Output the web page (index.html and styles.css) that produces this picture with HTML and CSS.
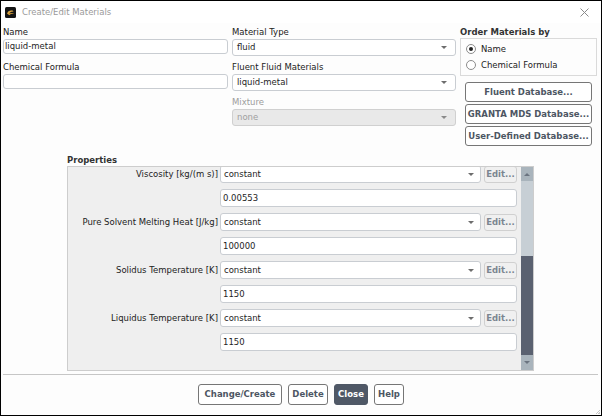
FILE: index.html
```html
<!DOCTYPE html>
<html>
<head>
<meta charset="utf-8">
<link rel="stylesheet" href="styles.css">
</head>
<body>
<div class="window">
  <div class="titlebar">
    <svg class="app-icon" width="11" height="11" viewBox="0 0 11 11">
      <rect x="0" y="0" width="11" height="11" rx="1.5" fill="#141414"/>
      <path d="M2 6.5 C3 3.5 7 3 9 4.5 C7.5 4.2 5 4.8 4.2 6.5 C5.5 5.6 8 5.6 9.3 7 C7.5 6.6 5.5 7 4.5 8.2 C3.8 7.6 2.8 7.2 2 6.5 Z" fill="#d9a03a"/>
      <path d="M3 5.2 C4.5 3.8 6.5 3.6 8 4" stroke="#f0c060" stroke-width="0.6" fill="none"/>
    </svg>
    <span class="title">Create/Edit Materials</span>
    <svg class="close-x" width="9" height="9" viewBox="0 0 9 9">
      <path d="M0.5 0.5 L8.5 8.5 M8.5 0.5 L0.5 8.5" stroke="#8a8a8a" stroke-width="1"/>
    </svg>
  </div>

  <div class="top">
    <div class="col col-a">
      <div class="field">
        <div class="label">Name</div>
        <div class="input">liquid-metal</div>
      </div>
      <div class="field">
        <div class="label">Chemical Formula</div>
        <div class="input"></div>
      </div>
    </div>
    <div class="col col-b">
      <div class="field">
        <div class="label">Material Type</div>
        <div class="select">fluid<span class="arrow"></span></div>
      </div>
      <div class="field">
        <div class="label">Fluent Fluid Materials</div>
        <div class="select">liquid-metal<span class="arrow"></span></div>
      </div>
      <div class="field">
        <div class="label disabled">Mixture</div>
        <div class="select is-disabled">none<span class="arrow"></span></div>
      </div>
    </div>
    <div class="col col-c">
      <div class="group-title">Order Materials by</div>
      <div class="radio-box">
        <div class="radio-row"><span class="radio checked"></span>Name</div>
        <div class="radio-row"><span class="radio"></span>Chemical Formula</div>
      </div>
      <div class="db-buttons">
        <div class="btn db">Fluent Database...</div>
        <div class="btn db">GRANTA MDS Database...</div>
        <div class="btn db">User-Defined Database...</div>
      </div>
    </div>
  </div>

  <div class="props">
    <div class="group-title props-title">Properties</div>
    <div class="panel">
      <div class="panel-content">
        <div class="prow">
          <div class="plabel">Viscosity [kg/(m s)]</div>
          <div class="select pselect">constant<span class="arrow"></span></div>
          <div class="edit">Edit...</div>
        </div>
        <div class="prow">
          <div class="plabel"></div>
          <div class="input pvalue">0.00553</div>
        </div>
        <div class="prow">
          <div class="plabel">Pure Solvent Melting Heat [J/kg]</div>
          <div class="select pselect">constant<span class="arrow"></span></div>
          <div class="edit">Edit...</div>
        </div>
        <div class="prow">
          <div class="plabel"></div>
          <div class="input pvalue">100000</div>
        </div>
        <div class="prow">
          <div class="plabel">Solidus Temperature [K]</div>
          <div class="select pselect">constant<span class="arrow"></span></div>
          <div class="edit">Edit...</div>
        </div>
        <div class="prow">
          <div class="plabel"></div>
          <div class="input pvalue">1150</div>
        </div>
        <div class="prow">
          <div class="plabel">Liquidus Temperature [K]</div>
          <div class="select pselect">constant<span class="arrow"></span></div>
          <div class="edit">Edit...</div>
        </div>
        <div class="prow">
          <div class="plabel"></div>
          <div class="input pvalue">1150</div>
        </div>
      </div>
      <div class="scrollbar">
        <div class="sb-arrow"><span class="tri-up"></span></div>
        <div class="sb-track"></div>
        <div class="sb-thumb"></div>
        <div class="sb-arrow sb-down"><span class="tri-down"></span></div>
      </div>
    </div>
  </div>

  <div class="separator"></div>

  <div class="actions">
    <div class="btn act w-change">Change/Create</div>
    <div class="btn act w-delete">Delete</div>
    <div class="btn act primary w-close">Close</div>
    <div class="btn act w-help">Help</div>
  </div>
  <div class="grip"></div>
</div>
</body>
</html>
```

FILE: styles.css
```css
* { box-sizing: border-box; margin: 0; padding: 0; }
html, body { width: 602px; height: 416px; overflow: hidden; }
body {
  font-family: "DejaVu Sans", "Noto Sans", sans-serif;
  font-size: 8.5px;
  color: #1e1e1e;
  background: #fdfdfd;
}
.window {
  position: relative;
  width: 602px;
  height: 416px;
  border: 1px solid #000;
  background: #fdfdfd;
  display: flex;
  flex-direction: column;
}

/* title bar */
.titlebar {
  height: 22px;
  display: flex;
  align-items: center;
  padding-left: 4px;
  gap: 6px;
  background: #fff;
}
.app-icon { flex: none; }
.title { color: #9a9a9a; font-size: 8.5px; }
.close-x { margin-left: auto; margin-right: 12px; }

/* top section */
.top {
  display: flex;
  padding: 2px 4px 0 2px;
  gap: 4px;
}
.col { display: flex; flex-direction: column; }
.col-a { width: 225px; }
.col-b { width: 224px; }
.col-c { width: 137px; }
.field { height: 35px; display: flex; flex-direction: column; }
.label { height: 14px; line-height: 14px; color: #222; }
.label.disabled { color: #9c9c9c; }

.input {
  height: 15px;
  line-height: 13px;
  border: 1px solid #c9cdd2;
  border-radius: 3px;
  background: #fff;
  padding-left: 1px;
  white-space: nowrap;
  overflow: hidden;
}
.select {
  position: relative;
  height: 17px;
  line-height: 15px;
  border: 1px solid #c9cdd2;
  border-radius: 3px;
  background: #fff;
  padding-left: 4px;
  white-space: nowrap;
}
.select.is-disabled {
  background: #e9e9e9;
  border-color: #d0d0d0;
  color: #a0a0a0;
}
.arrow {
  position: absolute;
  right: 8px;
  top: 6px;
  width: 0;
  height: 0;
  border-left: 3px solid transparent;
  border-right: 3px solid transparent;
  border-top: 3px solid #6d6d6d;
}
.is-disabled .arrow { border-top-color: #8a8a8a; }

.group-title {
  font-weight: bold;
  color: #333;
  height: 13px;
  line-height: 14px;
}
.radio-box {
  height: 38px;
  border: 1px solid #dadada;
  padding: 2px 0 0 5px;
}
.radio-row {
  height: 16px;
  display: flex;
  align-items: center;
  gap: 5px;
  color: #222;
}
.radio {
  width: 10px;
  height: 10px;
  border: 1px solid #8c8c8c;
  border-radius: 50%;
  background: #fff;
  display: flex;
  align-items: center;
  justify-content: center;
}
.radio.checked::after {
  content: "";
  width: 4px;
  height: 4px;
  border-radius: 50%;
  background: #222;
}
.db-buttons {
  margin: 6px 0 0 5px;
  width: 127px;
  display: flex;
  flex-direction: column;
  gap: 2px;
}
.btn {
  border: 1px solid #767676;
  border-radius: 3px;
  background: #fff;
  font-weight: bold;
  color: #4d5663;
  text-align: center;
  white-space: nowrap;
}
.btn.db { height: 20px; line-height: 18px; }

/* properties */
.props {
  margin: 8px 0 0 66px;
  display: flex;
  flex-direction: column;
}
.props-title { height: 12px; line-height: 12px; }
.panel {
  width: 467px;
  height: 205px;
  border: 1px solid #cdcdcd;
  background: #efefef;
  display: flex;
  overflow: hidden;
}
.panel-content {
  flex: 1;
  margin-top: -2px;
  display: flex;
  flex-direction: column;
  gap: 6px;
}
.prow {
  height: 18px;
  display: flex;
  align-items: center;
  flex: none;
}
.plabel {
  width: 150px;
  text-align: right;
  margin-right: 2px;
  color: #222;
  white-space: nowrap;
}
.pselect { width: 261px; height: 18px; line-height: 16px; padding-left: 3px; }
.pselect .arrow { right: 6px; top: 7px; }
.edit {
  width: 33px;
  height: 17px;
  line-height: 15px;
  margin-left: 3px;
  border: 1px solid #d0d0d0;
  border-radius: 3px;
  background: #f0f0f0;
  color: #7b8590;
  font-weight: bold;
  text-align: center;
}
.pvalue { width: 297px; height: 18px; line-height: 16px; padding-left: 2px; }

.scrollbar {
  width: 12px;
  display: flex;
  flex-direction: column;
  background: #c7cfd5;
}
.sb-arrow {
  height: 14px;
  background: #a9b4bc;
  display: flex;
  align-items: center;
  justify-content: center;
  flex: none;
}
.sb-down { height: 15px; }
.sb-track { flex: 1; }
.sb-thumb { height: 99px; background: #5a6170; flex: none; }
.tri-up {
  width: 0; height: 0;
  border-left: 3px solid transparent;
  border-right: 3px solid transparent;
  border-bottom: 3px solid #6b7480;
}
.tri-down {
  width: 0; height: 0;
  border-left: 3px solid transparent;
  border-right: 3px solid transparent;
  border-top: 3px solid #6b7480;
}

/* bottom */
.separator {
  margin: 3px 3px 0 2px;
  height: 1px;
  background: #c6c6c6;
}
.actions {
  margin-top: 9px;
  display: flex;
  justify-content: center;
  gap: 6px;
}
.btn.act { height: 21px; line-height: 19px; }
.w-change { width: 84px; }
.w-delete { width: 40px; }
.w-close { width: 34px; }
.w-help { width: 30px; }
.btn.primary {
  background: #4f5866;
  border-color: #4f5866;
  color: #fff;
}
.grip {
  position: absolute;
  right: 1px;
  bottom: 1px;
  width: 6px;
  height: 6px;
  background: repeating-linear-gradient(135deg, transparent 0 1px, #c9c9c9 1px 2px);
  clip-path: polygon(100% 0, 100% 100%, 0 100%);
}
```
